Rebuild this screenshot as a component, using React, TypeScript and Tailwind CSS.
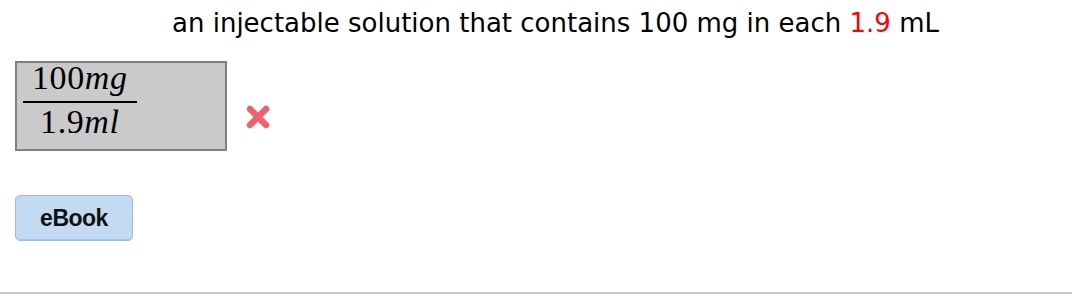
import React from 'react';

const WrongMark = () => (
  <svg width="28" height="26" viewBox="0 0 28 26" className="block">
    <path d="M6 5 L22 21 M22 5 L6 21" stroke="#f2606b" strokeWidth="6.5" strokeLinecap="round" />
  </svg>
);

const App = () => {
  return (
    <div className="w-[1072px] h-[302px] bg-white flex flex-col">
      <div className="pt-[8px] pl-[172px] text-[26px] leading-[30px] text-black whitespace-nowrap" style={{ fontFamily: 'Verdana, "DejaVu Sans", sans-serif' }}>
        an injectable solution that contains 100 mg in each <span className="text-[#ff0000]">1.9</span> mL
      </div>

      <div className="mt-[23px] ml-[15px] flex items-start">
        <div className="w-[212px] h-[90px] bg-[#cacaca] border-2 border-[#808080] pl-[6px]" style={{ fontFamily: '"Liberation Serif", "Times New Roman", serif' }}>
          <div className="inline-flex flex-col items-center text-[34px] leading-[30px] tracking-[0.6px] text-black">
            <div className="px-[9px] pb-[8px] border-b-2 border-black">100<i>mg</i></div>
            <div className="px-[9px] pt-[4px]">1.9<i>ml</i></div>
          </div>
        </div>
        <div className="ml-[17px] mt-[43px]">
          <WrongMark />
        </div>
      </div>

      <div className="mt-[44px] ml-[15px]">
        <button className="w-[118px] h-[46px] rounded-[5px] border border-[#9dbbe0] bg-[#c3daf3] text-[23px] font-bold text-[#111] tracking-[-0.5px] shadow-[inset_0_-1px_0_#a8c4e6]" style={{ fontFamily: '"Liberation Sans", Arial, sans-serif' }}>
          eBook
        </button>
      </div>

      <div className="mt-auto mb-[8px] h-[2px] bg-[#cacaca]" />
    </div>
  );
};

export default App;
